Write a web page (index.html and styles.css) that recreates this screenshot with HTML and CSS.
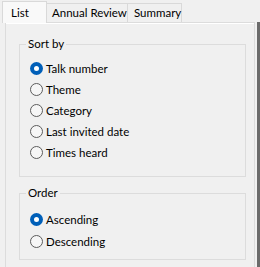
FILE: index.html
```html
<!DOCTYPE html>
<html lang="en">
<head>
  <meta charset="UTF-8" />
  <title>Talk list options</title>
  <link rel="stylesheet" href="styles.css">
</head>
<body>
  <div class="tabs">
    <div class="tab active">List</div>
    <div class="tab">Annual Review</div>
    <div class="tab">Summary</div>
  </div>

  <div class="page">
    <div class="panel">
      <fieldset class="group">
        <legend>Sort by</legend>
        <label class="option"><input type="radio" name="sort" checked> Talk number</label>
        <label class="option"><input type="radio" name="sort"> Theme</label>
        <label class="option"><input type="radio" name="sort"> Category</label>
        <label class="option"><input type="radio" name="sort"> Last invited date</label>
        <label class="option"><input type="radio" name="sort"> Times heard</label>
      </fieldset>

      <fieldset class="group order">
        <legend>Order</legend>
        <label class="option"><input type="radio" name="order" checked> Ascending</label>
        <label class="option"><input type="radio" name="order"> Descending</label>
      </fieldset>
    </div>
    <!-- splitter edge on the right -->
    <div class="edge"></div>
  </div>
</body>
</html>
```

FILE: styles.css
```css
body {
  margin: 0;
  width: 260px;
  height: 267px;
  overflow: hidden;
  font-family: Lato, "Noto Sans", sans-serif;
  font-size: 11.5px;
  color: #000;
  background-color: #f0f0f0;
}
.tabs {
  display: flex;
  align-items: flex-end;
  height: 22px;
  padding-left: 2px;
}
.tab {
  height: 19px;
  line-height: 18px;
  padding: 0 5px;
  white-space: nowrap;
  border: 1px solid #d9d9d9;
  border-bottom: none;
  background-color: #f0f0f0;
  box-sizing: border-box;
}
.tab + .tab {
  border-left: none;
}
.tab.active {
  height: 22px;
  width: 45px;
  padding-left: 8px;
  line-height: 21px;
  margin-bottom: -1px;
  background-color: #f9f9f9;
  position: relative;
  z-index: 1;
}
.tab:nth-child(2) {
  width: 81px;
}
.tab:nth-child(3) {
  width: 54px;
  padding-left: 6px;
}
.page {
  display: flex;
  height: 245px;
}
.panel {
  margin-left: 5px;
  width: 250px;
  border: 1px solid #dcdcdc;
  border-bottom: none;
  box-shadow: inset 0 1px #fff;
  box-sizing: border-box;
  padding: 13px 8px 0 13px;
}
.edge {
  width: 3px;
  margin-left: 2px;
  background-color: #6b6b6b;
}
.group {
  margin: 0;
  padding: 6px 0 13px 10px;
  border: 1px solid #dcdcdc;
  width: 227px;
  box-sizing: border-box;
}
.group legend {
  margin-left: -4px;
  padding: 0 2px;
  line-height: 16px;
}
.group.order {
  margin-top: 8px;
  padding-top: 7px;
  padding-bottom: 7px;
}
.order .option {
  height: 22px;
}
.option {
  display: flex;
  align-items: center;
  gap: 3px;
  height: 21px;
}
.option input {
  appearance: none;
  margin: 0;
  width: 13px;
  height: 13px;
  border: 1px solid #5c5c5c;
  border-radius: 50%;
  background-color: #f6f6f6;
  box-sizing: border-box;
}
.option input:checked {
  border: none;
  background-color: #fff;
  box-shadow: inset 0 0 0 4px #005fb8;
}
```
